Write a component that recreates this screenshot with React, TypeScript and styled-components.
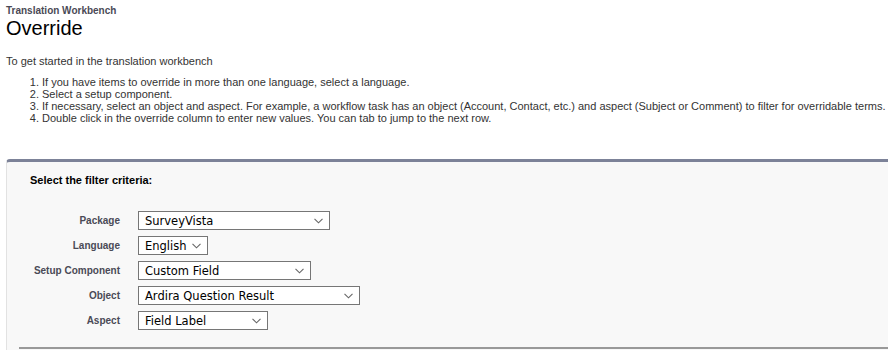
import React from "react";
import styled, { createGlobalStyle } from "styled-components";

const GlobalStyle = createGlobalStyle`
  html, body {
    margin: 0;
    padding: 0;
    background: #ffffff;
    overflow: hidden;
  }
  body {
    font-family: "Liberation Sans", Arial, sans-serif;
    color: #333;
  }
`;

const steps = [
  "If you have items to override in more than one language, select a language.",
  "Select a setup component.",
  "If necessary, select an object and aspect. For example, a workflow task has an object (Account, Contact, etc.) and aspect (Subject or Comment) to filter for overridable terms.",
  "Double click in the override column to enter new values. You can tab to jump to the next row.",
];

const filters = [
  { label: "Package", value: "SurveyVista", width: 192 },
  { label: "Language", value: "English", width: 70 },
  { label: "Setup Component", value: "Custom Field", width: 173 },
  { label: "Object", value: "Ardira Question Result", width: 222 },
  { label: "Aspect", value: "Field Label", width: 130 },
];

const Chevron = () => (
  <svg width="9" height="6" viewBox="0 0 9 6" fill="none">
    <path d="M0.5 0.8 L4.5 4.8 L8.5 0.8" stroke="#666" strokeWidth="1.1" />
  </svg>
);

export default function App() {
  return (
    <>
      <GlobalStyle />
      <Page>
        <Header>
          <Breadcrumb>Translation Workbench</Breadcrumb>
          <Title>Override</Title>
        </Header>
        <Intro>To get started in the translation workbench</Intro>
        <Steps>
          {steps.map((s, i) => (
            <li key={i}>{s}</li>
          ))}
        </Steps>
        <Panel>
          <PanelTitle>Select the filter criteria:</PanelTitle>
          <FilterGrid>
            {filters.map((f) => (
              <React.Fragment key={f.label}>
                <Label>{f.label}</Label>
                <SelectBox style={{ width: f.width }}>
                  <span>{f.value}</span>
                  <Chevron />
                </SelectBox>
              </React.Fragment>
            ))}
          </FilterGrid>
          <BottomRule />
        </Panel>
      </Page>
    </>
  );
}

const Page = styled.div`
  padding: 5px 0 0 6px;
  width: 900px;
`;

const Header = styled.div`
  display: flex;
  flex-direction: column;
`;

const Breadcrumb = styled.div`
  font-size: 10px;
  font-weight: bold;
  color: #4a4a56;
  line-height: 11px;
`;

const Title = styled.h1`
  margin: 0;
  font-size: 20px;
  font-weight: normal;
  color: #000;
  line-height: 24px;
`;

const Intro = styled.p`
  margin: 14px 0 0;
  font-size: 11px;
  line-height: 14px;
  color: #333;
`;

const Steps = styled.ol`
  margin: 8px 0 0;
  padding-left: 36px;
  font-size: 11px;
  line-height: 12px;
  color: #333;
`;

const Panel = styled.div`
  margin-top: 35px;
  background: #f8f8f8;
  border-top: 3px solid #7c8298;
  border-left: 1px solid #e2e2e2;
  border-top-left-radius: 4px;
  padding: 0 0 0 12px;
  height: 200px;
`;

const PanelTitle = styled.div`
  padding: 11px 0 0 11px;
  font-size: 11px;
  font-weight: bold;
  color: #000;
  line-height: 14px;
`;

const FilterGrid = styled.div`
  display: grid;
  grid-template-columns: 101px auto;
  column-gap: 18px;
  row-gap: 6px;
  align-items: center;
  justify-items: start;
  margin-top: 24px;
`;

const Label = styled.div`
  justify-self: end;
  font-size: 10px;
  font-weight: bold;
  color: #4a4a56;
`;

const SelectBox = styled.div`
  box-sizing: border-box;
  height: 19px;
  display: flex;
  align-items: center;
  justify-content: space-between;
  padding: 0 6px 0 6px;
  background: #fff;
  border: 1px solid #767676;
  font-family: "DejaVu Sans", Tahoma, sans-serif;
  font-size: 11.5px;
  color: #000;
`;

const BottomRule = styled.div`
  margin-top: 17px;
  height: 2px;
  background: #999;
`;
